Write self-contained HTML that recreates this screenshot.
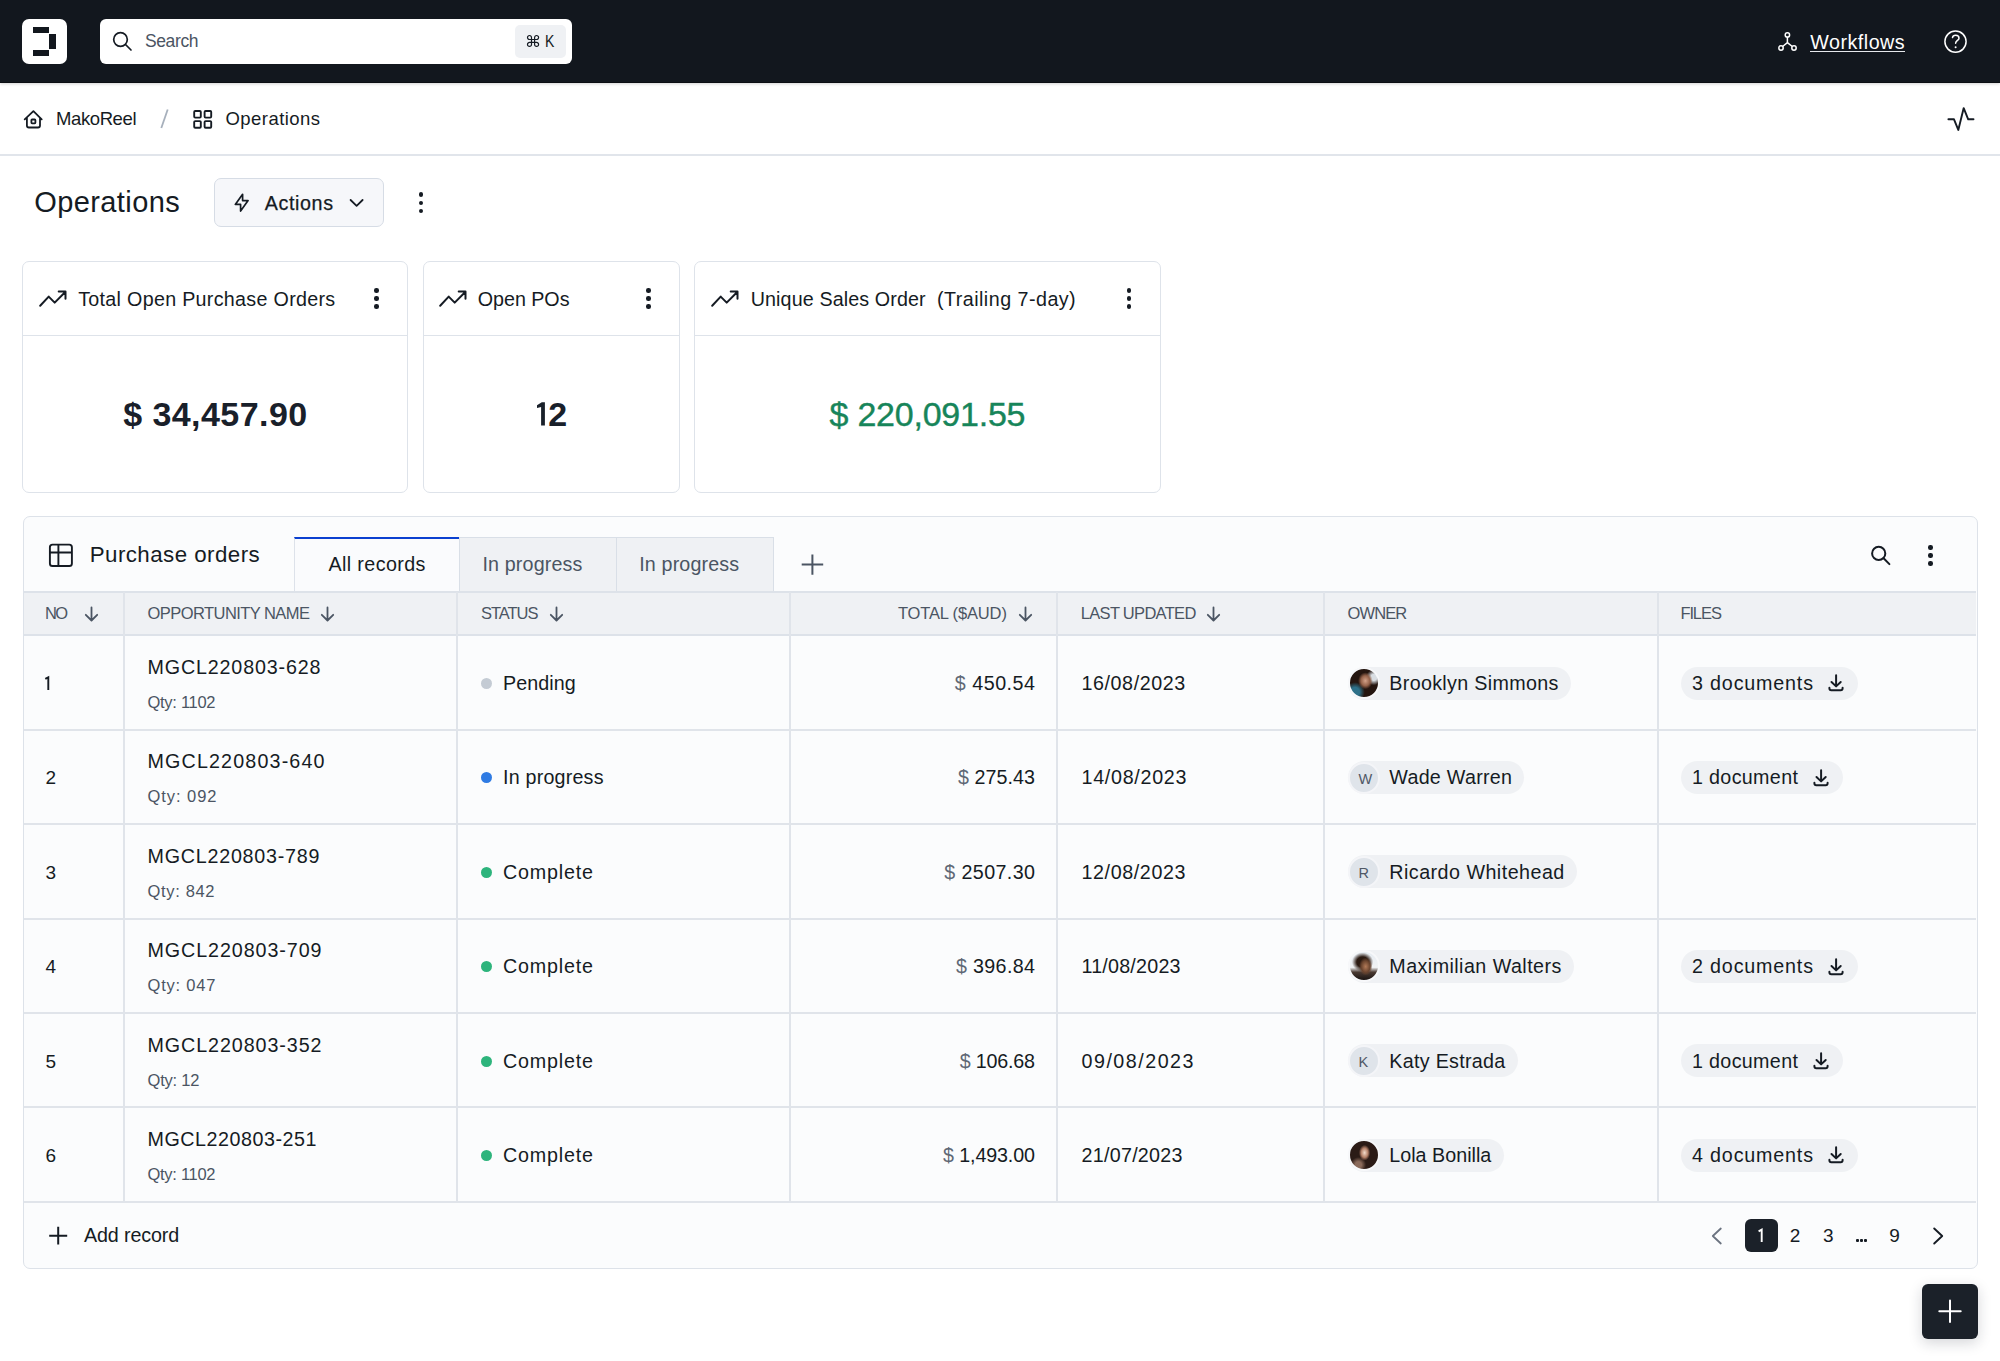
<!DOCTYPE html>
<html><head><meta charset="utf-8"><title>Operations</title>
<style>
html,body{margin:0;padding:0}
body{width:2000px;height:1361px;position:relative;overflow:hidden;background:#ffffff;font-family:"Liberation Sans", sans-serif}
.t{position:absolute;white-space:pre;font-family:"Liberation Sans", sans-serif}
svg{overflow:visible}
</style></head><body>
<div style="position:absolute;left:0;top:0;width:2000px;height:83px;background:#12171e;box-shadow:0 1px 3px rgba(0,0,0,0.18)"></div>
<div style="position:absolute;left:0;top:82px;width:2000px;height:1px;background:#0b0e13"></div>
<div style="position:absolute;left:22px;top:19px;width:45px;height:45px;background:#fff;border-radius:7px"></div>
<div style="position:absolute;left:33px;top:27px;width:16px;height:6px;background:#12171e"></div>
<div style="position:absolute;left:49px;top:34px;width:7px;height:15px;background:#12171e"></div>
<div style="position:absolute;left:33px;top:50px;width:16px;height:6px;background:#12171e"></div>
<div style="position:absolute;left:100px;top:19px;width:472px;height:45px;background:#fff;border-radius:6px"></div>
<svg style="position:absolute;left:108px;top:27px" width="30" height="30" viewBox="108 27 30 30"><circle cx="120.5" cy="39.5" r="6.8" fill="none" stroke="#151b23" stroke-width="1.7"/><line x1="125.5" y1="44.5" x2="131" y2="50" stroke="#151b23" stroke-width="1.7" stroke-linecap="round"/></svg>
<div style="position:absolute;left:515px;top:25px;width:51px;height:33px;background:#eff1f4;border-radius:5px"></div>
<svg style="position:absolute;left:522px;top:30px" width="24" height="24" viewBox="522 30 24 24"><path d="M531.5 39.5 V37.6 A2 2 0 1 0 529.6 39.5 H536.5 A2 2 0 1 0 534.6 37.6 V44.4 A2 2 0 1 0 536.5 42.45 H529.6 A2 2 0 1 0 531.5 44.4 Z" fill="none" stroke="#151b23" stroke-width="1.2"/></svg>
<svg style="position:absolute;left:1770px;top:25px" width="36" height="36" viewBox="1770 25 36 36" fill="none" stroke="#fff" stroke-width="1.5"><circle cx="1787.4" cy="34.9" r="2.2"/><circle cx="1781" cy="48" r="2.2"/><circle cx="1794" cy="48" r="2.2"/><path d="M1787.4 37.1 V42.6 L1782.6 46.5 M1787.4 42.6 L1792.3 46.5"/></svg>
<div style="position:absolute;left:1810px;top:51px;width:95px;height:1px;background:#e6e8ec"></div>
<svg style="position:absolute;left:1940px;top:26px" width="32" height="32" viewBox="1940 26 32 32" fill="none" stroke="#fff" stroke-width="1.5"><circle cx="1955.5" cy="41.6" r="10.6"/><path d="M1952.5 37.6 C1952.7 36 1954 35.3 1955.6 35.3 C1957.6 35.3 1959 36.5 1959 38.2 C1959 40.3 1955.6 40.7 1955.6 43.3" stroke-linecap="round"/><circle cx="1955.6" cy="47.3" r="1" fill="#fff" stroke="none"/></svg>
<div style="position:absolute;left:0;top:153.5px;width:2000px;height:2px;background:#e1e5eb"></div>
<svg style="position:absolute;left:20px;top:105px" width="28" height="28" viewBox="20 105 28 28" fill="none" stroke="#151b23" stroke-width="1.8" stroke-linejoin="round"><path d="M24.7 119.3 L33.4 111.2 L41.7 119.3 M26.9 117.6 V125.5 Q26.9 127.5 28.9 127.5 H38 Q40 127.5 40 125.5 V117.6" stroke-linecap="round"/><rect x="31.4" y="119.5" width="4" height="3.8" rx="0.7"/></svg>
<svg style="position:absolute;left:156px;top:105px" width="18" height="28" viewBox="156 105 18 28"><line x1="167.7" y1="109.5" x2="161.3" y2="128" stroke="#a7b0bc" stroke-width="1.8"/></svg>
<svg style="position:absolute;left:190px;top:106px" width="26" height="26" viewBox="190 106 26 26" fill="none" stroke="#151b23" stroke-width="1.9"><rect x="194.2" y="111" width="6.6" height="6.6" rx="1"/><rect x="204.6" y="111" width="6.6" height="6.6" rx="1"/><rect x="194.2" y="121.1" width="6.6" height="6.6" rx="1"/><rect x="204.6" y="121.1" width="6.6" height="6.6" rx="1"/></svg>
<svg style="position:absolute;left:1944px;top:104px" width="34" height="30" viewBox="1944 104 34 30" fill="none" stroke="#151b23" stroke-width="1.9" stroke-linejoin="round" stroke-linecap="round"><path d="M1948.4 119.3 H1954 L1958.3 129.9 L1963.7 108.1 L1968.2 119.3 H1973.5"/></svg>
<div style="position:absolute;left:214px;top:178px;width:170px;height:49px;box-sizing:border-box;background:#f6f7fa;border:1.5px solid #d6dce5;border-radius:7px"></div>
<svg style="position:absolute;left:228px;top:188px" width="24" height="30" viewBox="228 188 24 30" fill="none" stroke="#151b23" stroke-width="1.7" stroke-linejoin="round"><path d="M242.6 194.3 L235.3 204.4 H240.6 V211.1 L248.1 200.6 H242.6 Z"/></svg>
<svg style="position:absolute;left:345px;top:193px" width="22" height="18" viewBox="345 193 22 18" fill="none" stroke="#151b23" stroke-width="1.8" stroke-linecap="round" stroke-linejoin="round"><path d="M350.6 200 L356.6 205.8 L362.6 200"/></svg>
<div style="position:absolute;left:418.55px;top:192.40px;width:4.4px;height:4.4px;border-radius:50%;background:#151b23"></div>
<div style="position:absolute;left:418.55px;top:200.50px;width:4.4px;height:4.4px;border-radius:50%;background:#151b23"></div>
<div style="position:absolute;left:418.55px;top:208.65px;width:4.4px;height:4.4px;border-radius:50%;background:#151b23"></div>
<div style="position:absolute;left:22.2px;top:261px;width:386.3px;height:231.75px;box-sizing:border-box;background:#fff;border:1.5px solid #dee3ea;border-radius:7px"></div>
<div style="position:absolute;left:22.2px;top:334.75px;width:386.3px;height:1.5px;background:#dee3ea"></div>
<div style="position:absolute;left:422.55px;top:261px;width:257.8px;height:231.75px;box-sizing:border-box;background:#fff;border:1.5px solid #dee3ea;border-radius:7px"></div>
<div style="position:absolute;left:422.55px;top:334.75px;width:257.8px;height:1.5px;background:#dee3ea"></div>
<div style="position:absolute;left:694.35px;top:261px;width:466.9px;height:231.75px;box-sizing:border-box;background:#fff;border:1.5px solid #dee3ea;border-radius:7px"></div>
<div style="position:absolute;left:694.35px;top:334.75px;width:466.9px;height:1.5px;background:#dee3ea"></div>
<svg style="position:absolute;left:34.8px;top:286px" width="36" height="24" viewBox="34.8 286 36 24" fill="none" stroke="#151b23" stroke-width="2" stroke-linecap="round" stroke-linejoin="round"><path d="M39.97 305.7 L48.50 296.6 L54.50 302.6 L65.30 291.7 M58.50 291.6 H65.30 V298.7"/></svg>
<svg style="position:absolute;left:435.3px;top:286px" width="36" height="24" viewBox="435.3 286 36 24" fill="none" stroke="#151b23" stroke-width="2" stroke-linecap="round" stroke-linejoin="round"><path d="M440.47 305.7 L449.00 296.6 L455.00 302.6 L465.80 291.7 M459.00 291.6 H465.80 V298.7"/></svg>
<svg style="position:absolute;left:707.2px;top:286px" width="36" height="24" viewBox="707.2 286 36 24" fill="none" stroke="#151b23" stroke-width="2" stroke-linecap="round" stroke-linejoin="round"><path d="M712.37 305.7 L720.90 296.6 L726.90 302.6 L737.70 291.7 M730.90 291.6 H737.70 V298.7"/></svg>
<div style="position:absolute;left:374.25px;top:288.15px;width:4.5px;height:4.5px;border-radius:50%;background:#151b23"></div>
<div style="position:absolute;left:374.25px;top:296.25px;width:4.5px;height:4.5px;border-radius:50%;background:#151b23"></div>
<div style="position:absolute;left:374.25px;top:304.35px;width:4.5px;height:4.5px;border-radius:50%;background:#151b23"></div>
<div style="position:absolute;left:646.15px;top:288.15px;width:4.5px;height:4.5px;border-radius:50%;background:#151b23"></div>
<div style="position:absolute;left:646.15px;top:296.25px;width:4.5px;height:4.5px;border-radius:50%;background:#151b23"></div>
<div style="position:absolute;left:646.15px;top:304.35px;width:4.5px;height:4.5px;border-radius:50%;background:#151b23"></div>
<div style="position:absolute;left:1126.85px;top:288.15px;width:4.5px;height:4.5px;border-radius:50%;background:#151b23"></div>
<div style="position:absolute;left:1126.85px;top:296.25px;width:4.5px;height:4.5px;border-radius:50%;background:#151b23"></div>
<div style="position:absolute;left:1126.85px;top:304.35px;width:4.5px;height:4.5px;border-radius:50%;background:#151b23"></div>
<svg style="position:absolute;left:530px;top:396px" width="20" height="36" viewBox="530 396 20 36"><path d="M537 405.2 L541.8 402.2 H544.9 V425.5 H541.1 V406.9 L537 408.1 Z" fill="#19202a"/></svg>
<div style="position:absolute;left:22.5px;top:515.5px;width:1955.05px;height:753.75px;box-sizing:border-box;background:#fbfcfd;border:1.5px solid #dde2e9;border-radius:7px;overflow:hidden"></div>
<svg style="position:absolute;left:45px;top:540px" width="32" height="30" viewBox="45 540 32 30" fill="none" stroke="#151b23" stroke-width="1.9"><rect x="49.9" y="544.6" width="22" height="21.4" rx="2.6"/><path d="M49.9 552.5 H71.9 M58.4 544.6 V566"/></svg>
<div style="position:absolute;left:294.3px;top:537.4px;width:165.4px;height:55px;box-sizing:border-box;background:#fafbfd;border-left:1.5px solid #dde2ea;border-right:1.5px solid #dde2ea;border-top:2.6px solid #0b40d0"></div>
<div style="position:absolute;left:459px;top:537px;width:157px;height:55px;box-sizing:border-box;background:#eff1f4;border-left:1.5px solid #d9dfe7;border-top:1.5px solid #d9dfe7"></div>
<div style="position:absolute;left:616px;top:537px;width:158px;height:55px;box-sizing:border-box;background:#eff1f4;border-left:1.5px solid #d9dfe7;border-top:1.5px solid #d9dfe7;border-right:1.5px solid #d9dfe7"></div>
<svg style="position:absolute;left:796px;top:549px" width="32" height="32" viewBox="796 549 32 32" fill="none" stroke="#4b5563" stroke-width="2"><path d="M812.4 554.4 V574.8 M801.7 564.6 H823.2"/></svg>
<svg style="position:absolute;left:1866px;top:541px" width="28" height="28" viewBox="1866 541 28 28" fill="none" stroke="#151b23" stroke-width="2"><circle cx="1878.7" cy="553.4" r="6.6"/><line x1="1883.6" y1="558.3" x2="1889.4" y2="564.1" stroke-linecap="round"/></svg>
<div style="position:absolute;left:1928.3999999999999px;top:545.3px;width:4.4px;height:4.4px;border-radius:50%;background:#151b23"></div>
<div style="position:absolute;left:1928.3999999999999px;top:553.3px;width:4.4px;height:4.4px;border-radius:50%;background:#151b23"></div>
<div style="position:absolute;left:1928.3999999999999px;top:561.4px;width:4.4px;height:4.4px;border-radius:50%;background:#151b23"></div>
<div style="position:absolute;left:24px;top:591px;width:1952px;height:45px;box-sizing:border-box;background:#eff1f4;border-top:2px solid #dde2e9;border-bottom:2px solid #dde2e9"></div>
<div style="position:absolute;left:123px;top:592px;width:2px;height:610px;background:#e0e4ea"></div>
<div style="position:absolute;left:456px;top:592px;width:2px;height:610px;background:#e0e4ea"></div>
<div style="position:absolute;left:789px;top:592px;width:2px;height:610px;background:#e0e4ea"></div>
<div style="position:absolute;left:1056px;top:592px;width:2px;height:610px;background:#e0e4ea"></div>
<div style="position:absolute;left:1323px;top:592px;width:2px;height:610px;background:#e0e4ea"></div>
<div style="position:absolute;left:1657px;top:592px;width:2px;height:610px;background:#e0e4ea"></div>
<svg style="position:absolute;left:82px;top:603px" width="20" height="22" viewBox="82 603 20 22" fill="none" stroke="#4b5563" stroke-width="1.8" stroke-linecap="round" stroke-linejoin="round"><path d="M91.5 607.4 V620.3 M85.8 614.8 L91.5 620.5 L97.2 614.8"/></svg>
<svg style="position:absolute;left:318.3px;top:603px" width="20" height="22" viewBox="318.3 603 20 22" fill="none" stroke="#4b5563" stroke-width="1.8" stroke-linecap="round" stroke-linejoin="round"><path d="M327.8 607.4 V620.3 M322.1 614.8 L327.8 620.5 L333.5 614.8"/></svg>
<svg style="position:absolute;left:546.8px;top:603px" width="20" height="22" viewBox="546.8 603 20 22" fill="none" stroke="#4b5563" stroke-width="1.8" stroke-linecap="round" stroke-linejoin="round"><path d="M556.3 607.4 V620.3 M550.5999999999999 614.8 L556.3 620.5 L562.0 614.8"/></svg>
<svg style="position:absolute;left:1016px;top:603px" width="20" height="22" viewBox="1016 603 20 22" fill="none" stroke="#4b5563" stroke-width="1.8" stroke-linecap="round" stroke-linejoin="round"><path d="M1025.5 607.4 V620.3 M1019.8 614.8 L1025.5 620.5 L1031.2 614.8"/></svg>
<svg style="position:absolute;left:1204.2px;top:603px" width="20" height="22" viewBox="1204.2 603 20 22" fill="none" stroke="#4b5563" stroke-width="1.8" stroke-linecap="round" stroke-linejoin="round"><path d="M1213.7 607.4 V620.3 M1208.0 614.8 L1213.7 620.5 L1219.4 614.8"/></svg>
<div style="position:absolute;left:24px;top:729px;width:1952px;height:2px;background:#e0e4ea"></div>
<svg style="position:absolute;left:40px;top:672px" width="16" height="22" viewBox="40 672 16 22" fill="none" stroke="#151b23" stroke-width="1.9"><path d="M45.3 678.9 L48.3 677.3 V690"/></svg>
<div style="position:absolute;left:480.5px;top:677.9px;width:11px;height:11px;border-radius:50%;background:#c4cbd4"></div>
<div class="chip" style="position:absolute;left:1348px;top:666.6px;height:33px;border-radius:17px;background:#eff1f4;width:222.6px"></div>
<div style="position:absolute;left:1348px;top:667.1px;width:32px;height:32px;box-sizing:border-box;border-radius:50%;border:2px solid #f7f8fa;background:radial-gradient(ellipse 26% 30% at 55% 42%, #d2a188, #94624a 60%, rgba(60,35,25,0) 100%), radial-gradient(circle at 18% 82%, #2d7088 0 14%, rgba(0,0,0,0) 30%), radial-gradient(circle at 85% 30%, #d8dde2 0 10%, rgba(0,0,0,0) 25%), #24150f"></div>
<div style="position:absolute;left:1680.6px;top:666.6px;height:33px;width:177.7px;border-radius:17px;background:#eff1f4"></div>
<svg style="position:absolute;left:1824.8px;top:671.4px" width="24" height="24" viewBox="0 0 24 24" fill="none" stroke="#151b23" stroke-width="2" stroke-linecap="round" stroke-linejoin="round"><path d="M11.1 4.3 V14.8 M6.5 11 L11.1 15.4 L15.7 11 M4.4 16.8 V17.3 Q4.4 19.2 6.3 19.2 H15.7 Q17.6 19.2 17.6 17.3 V16.8" stroke-width="2"/></svg>
<div style="position:absolute;left:24px;top:823px;width:1952px;height:2px;background:#e0e4ea"></div>
<div style="position:absolute;left:480.5px;top:772.3px;width:11px;height:11px;border-radius:50%;background:#2f7be3"></div>
<div class="chip" style="position:absolute;left:1348px;top:761.0px;height:33px;border-radius:17px;background:#eff1f4;width:176.3px"></div>
<div style="position:absolute;left:1348px;top:761.5px;width:32px;height:32px;box-sizing:border-box;border-radius:50%;border:2px solid #f4f5f8;background:#dfe4ea"></div>
<div style="position:absolute;left:1680.6px;top:761.0px;height:33px;width:162.6px;border-radius:17px;background:#eff1f4"></div>
<svg style="position:absolute;left:1809.7px;top:765.8px" width="24" height="24" viewBox="0 0 24 24" fill="none" stroke="#151b23" stroke-width="2" stroke-linecap="round" stroke-linejoin="round"><path d="M11.1 4.3 V14.8 M6.5 11 L11.1 15.4 L15.7 11 M4.4 16.8 V17.3 Q4.4 19.2 6.3 19.2 H15.7 Q17.6 19.2 17.6 17.3 V16.8" stroke-width="2"/></svg>
<div style="position:absolute;left:24px;top:918px;width:1952px;height:2px;background:#e0e4ea"></div>
<div style="position:absolute;left:480.5px;top:866.7px;width:11px;height:11px;border-radius:50%;background:#2db47c"></div>
<div class="chip" style="position:absolute;left:1348px;top:855.4px;height:33px;border-radius:17px;background:#eff1f4;width:228.6px"></div>
<div style="position:absolute;left:1348px;top:855.9px;width:32px;height:32px;box-sizing:border-box;border-radius:50%;border:2px solid #f4f5f8;background:#dfe4ea"></div>
<div style="position:absolute;left:24px;top:1012px;width:1952px;height:2px;background:#e0e4ea"></div>
<div style="position:absolute;left:480.5px;top:961.1px;width:11px;height:11px;border-radius:50%;background:#2db47c"></div>
<div class="chip" style="position:absolute;left:1348px;top:949.8px;height:33px;border-radius:17px;background:#eff1f4;width:225.6px"></div>
<div style="position:absolute;left:1348px;top:950.3px;width:32px;height:32px;box-sizing:border-box;border-radius:50%;border:2px solid #f7f8fa;background:radial-gradient(ellipse 24% 32% at 56% 52%, #b27a58, #6a442e 65%, rgba(0,0,0,0) 100%), radial-gradient(ellipse 38% 34% at 45% 36%, #2b1a12 0 55%, rgba(0,0,0,0) 100%), linear-gradient(#e6ecf2, #f1f3f5 55%, #4a3a32 72%, #1a1412)"></div>
<div style="position:absolute;left:1680.6px;top:949.8px;height:33px;width:177.7px;border-radius:17px;background:#eff1f4"></div>
<svg style="position:absolute;left:1824.8px;top:954.6px" width="24" height="24" viewBox="0 0 24 24" fill="none" stroke="#151b23" stroke-width="2" stroke-linecap="round" stroke-linejoin="round"><path d="M11.1 4.3 V14.8 M6.5 11 L11.1 15.4 L15.7 11 M4.4 16.8 V17.3 Q4.4 19.2 6.3 19.2 H15.7 Q17.6 19.2 17.6 17.3 V16.8" stroke-width="2"/></svg>
<div style="position:absolute;left:24px;top:1106px;width:1952px;height:2px;background:#e0e4ea"></div>
<div style="position:absolute;left:480.5px;top:1055.5px;width:11px;height:11px;border-radius:50%;background:#2db47c"></div>
<div class="chip" style="position:absolute;left:1348px;top:1044.2px;height:33px;border-radius:17px;background:#eff1f4;width:169.6px"></div>
<div style="position:absolute;left:1348px;top:1044.7px;width:32px;height:32px;box-sizing:border-box;border-radius:50%;border:2px solid #f4f5f8;background:#dfe4ea"></div>
<div style="position:absolute;left:1680.6px;top:1044.2px;height:33px;width:162.6px;border-radius:17px;background:#eff1f4"></div>
<svg style="position:absolute;left:1809.7px;top:1049.0px" width="24" height="24" viewBox="0 0 24 24" fill="none" stroke="#151b23" stroke-width="2" stroke-linecap="round" stroke-linejoin="round"><path d="M11.1 4.3 V14.8 M6.5 11 L11.1 15.4 L15.7 11 M4.4 16.8 V17.3 Q4.4 19.2 6.3 19.2 H15.7 Q17.6 19.2 17.6 17.3 V16.8" stroke-width="2"/></svg>
<div style="position:absolute;left:24px;top:1201px;width:1952px;height:2px;background:#e0e4ea"></div>
<div style="position:absolute;left:480.5px;top:1149.9px;width:11px;height:11px;border-radius:50%;background:#2db47c"></div>
<div class="chip" style="position:absolute;left:1348px;top:1138.6px;height:33px;border-radius:17px;background:#eff1f4;width:155.6px"></div>
<div style="position:absolute;left:1348px;top:1139.1px;width:32px;height:32px;box-sizing:border-box;border-radius:50%;border:2px solid #f7f8fa;background:radial-gradient(ellipse 20% 28% at 52% 42%, #f3dccb, #b48068 60%, rgba(0,0,0,0) 100%), radial-gradient(circle at 30% 85%, #8a6a5a 0 10%, rgba(0,0,0,0) 25%), #2b1b16"></div>
<div style="position:absolute;left:1680.6px;top:1138.6px;height:33px;width:177.7px;border-radius:17px;background:#eff1f4"></div>
<svg style="position:absolute;left:1824.8px;top:1143.4px" width="24" height="24" viewBox="0 0 24 24" fill="none" stroke="#151b23" stroke-width="2" stroke-linecap="round" stroke-linejoin="round"><path d="M11.1 4.3 V14.8 M6.5 11 L11.1 15.4 L15.7 11 M4.4 16.8 V17.3 Q4.4 19.2 6.3 19.2 H15.7 Q17.6 19.2 17.6 17.3 V16.8" stroke-width="2"/></svg>
<svg style="position:absolute;left:44px;top:1222px" width="28" height="28" viewBox="44 1222 28 28" fill="none" stroke="#151b23" stroke-width="2"><path d="M58.2 1226.7 V1244.6 M49.2 1235.7 H67.2"/></svg>
<svg style="position:absolute;left:1706px;top:1224px" width="22" height="24" viewBox="1706 1224 22 24" fill="none" stroke="#6b7380" stroke-width="1.8" stroke-linecap="round" stroke-linejoin="round"><path d="M1720.8 1228.5 L1712.8 1236 L1720.8 1243.5"/></svg>
<div style="position:absolute;left:1744.7px;top:1219.3px;width:33px;height:33px;border-radius:6px;background:#1b2129"></div>
<svg style="position:absolute;left:1750px;top:1222px" width="22" height="28" viewBox="1750 1222 22 28" fill="none" stroke="#ffffff" stroke-width="1.9"><path d="M1758.6 1231.4 L1761.7 1229.6 V1242"/></svg>
<div style="position:absolute;left:1856px;top:1239px;width:3px;height:3px;background:#151b23;border-radius:1px"></div><div style="position:absolute;left:1860.2px;top:1239px;width:3px;height:3px;background:#151b23;border-radius:1px"></div><div style="position:absolute;left:1864.4px;top:1239px;width:3px;height:3px;background:#151b23;border-radius:1px"></div>
<svg style="position:absolute;left:1926px;top:1224px" width="22" height="24" viewBox="1926 1224 22 24" fill="none" stroke="#151b23" stroke-width="1.9" stroke-linecap="round" stroke-linejoin="round"><path d="M1934.2 1228.5 L1942.2 1236 L1934.2 1243.5"/></svg>
<div style="position:absolute;left:1922px;top:1283.5px;width:55.5px;height:55.5px;border-radius:6px;background:#1b2129;box-shadow:0 4px 14px rgba(20,30,45,0.18)"></div>
<svg style="position:absolute;left:1930px;top:1291px" width="40" height="40" viewBox="1930 1291 40 40" fill="none" stroke="#fff" stroke-width="2"><path d="M1950 1300.5 V1322 M1939.3 1311.2 H1960.7" stroke-linecap="round"/></svg>
<div class="t" style="left:145.00px;top:33.00px;font-size:17.5px;line-height:17.5px;color:#4b5563;font-weight:400;letter-spacing:-0.391px;">Search</div>
<div class="t" style="left:545.00px;top:33.00px;font-size:16.5px;line-height:16.5px;color:#151b23;font-weight:400;letter-spacing:0.000px;transform:scaleX(0.85);transform-origin:0 0;">K</div>
<div class="t" style="left:1810.20px;top:33.00px;font-size:19.7px;line-height:19.7px;color:#ffffff;font-weight:400;letter-spacing:0.508px;">Workflows</div>
<div class="t" style="left:56.00px;top:110.00px;font-size:18.5px;line-height:18.5px;color:#151b23;font-weight:400;letter-spacing:-0.400px;">MakoReel</div>
<div class="t" style="left:225.50px;top:110.00px;font-size:18.5px;line-height:18.5px;color:#151b23;font-weight:400;letter-spacing:0.444px;">Operations</div>
<div class="t" style="left:34.30px;top:188.00px;font-size:29px;line-height:29px;color:#151b23;font-weight:400;letter-spacing:0.393px;">Operations</div>
<div class="t" style="left:264.70px;top:194.00px;font-size:19.7px;line-height:19.7px;color:#151b23;font-weight:400;letter-spacing:0.623px;-webkit-text-stroke:0.25px #151b23;">Actions</div>
<div class="t" style="left:78.20px;top:290.00px;font-size:19.7px;line-height:19.7px;color:#151b23;font-weight:400;letter-spacing:0.300px;">Total Open Purchase Orders</div>
<div class="t" style="left:477.80px;top:290.00px;font-size:19.7px;line-height:19.7px;color:#151b23;font-weight:400;letter-spacing:-0.032px;">Open POs</div>
<div class="t" style="left:750.70px;top:290.00px;font-size:19.7px;line-height:19.7px;color:#151b23;font-weight:400;letter-spacing:0.123px;">Unique Sales Order</div>
<div class="t" style="left:936.90px;top:290.00px;font-size:19.7px;line-height:19.7px;color:#151b23;font-weight:400;letter-spacing:0.476px;">(Trailing 7-day)</div>
<div class="t" style="left:123.20px;top:397.00px;font-size:34px;line-height:34px;color:#19202a;font-weight:700;letter-spacing:0.438px;">$ 34,457.90</div>
<div class="t" style="left:548.20px;top:397.00px;font-size:34px;line-height:34px;color:#19202a;font-weight:700;letter-spacing:0.000px;">2</div>
<div class="t" style="left:829.50px;top:397.00px;font-size:34px;line-height:34px;color:#17855a;font-weight:400;letter-spacing:-0.230px;-webkit-text-stroke:0.4px #17855a;">$ 220,091.55</div>
<div class="t" style="left:89.70px;top:544.00px;font-size:22.3px;line-height:22.3px;color:#151b23;font-weight:400;letter-spacing:0.458px;">Purchase orders</div>
<div class="t" style="left:328.40px;top:555.00px;font-size:19.7px;line-height:19.7px;color:#151b23;font-weight:400;letter-spacing:0.400px;">All records</div>
<div class="t" style="left:482.40px;top:555.00px;font-size:19.7px;line-height:19.7px;color:#4b5563;font-weight:400;letter-spacing:0.150px;">In progress</div>
<div class="t" style="left:639.20px;top:555.00px;font-size:19.7px;line-height:19.7px;color:#4b5563;font-weight:400;letter-spacing:0.150px;">In progress</div>
<div class="t" style="left:45.00px;top:605.00px;font-size:16.5px;line-height:16.5px;color:#4b5563;font-weight:400;letter-spacing:-1.550px;">NO</div>
<div class="t" style="left:147.50px;top:605.00px;font-size:16.5px;line-height:16.5px;color:#4b5563;font-weight:400;letter-spacing:-0.556px;">OPPORTUNITY NAME</div>
<div class="t" style="left:481.00px;top:605.00px;font-size:16.5px;line-height:16.5px;color:#4b5563;font-weight:400;letter-spacing:-1.048px;">STATUS</div>
<div class="t" style="left:897.90px;top:605.00px;font-size:16.5px;line-height:16.5px;color:#4b5563;font-weight:400;letter-spacing:-0.149px;">TOTAL ($AUD)</div>
<div class="t" style="left:1080.80px;top:605.00px;font-size:16.5px;line-height:16.5px;color:#4b5563;font-weight:400;letter-spacing:-0.697px;">LAST UPDATED</div>
<div class="t" style="left:1347.50px;top:605.00px;font-size:16.5px;line-height:16.5px;color:#4b5563;font-weight:400;letter-spacing:-0.887px;">OWNER</div>
<div class="t" style="left:1680.40px;top:605.00px;font-size:16.5px;line-height:16.5px;color:#4b5563;font-weight:400;letter-spacing:-1.090px;">FILES</div>
<div class="t" style="left:147.50px;top:658.00px;font-size:19.7px;line-height:19.7px;color:#151b23;font-weight:400;letter-spacing:0.847px;">MGCL220803-628</div>
<div class="t" style="left:147.50px;top:694.00px;font-size:16.5px;line-height:16.5px;color:#4b5563;font-weight:400;letter-spacing:-0.291px;">Qty: 1102</div>
<div class="t" style="left:503.00px;top:674.00px;font-size:19.7px;line-height:19.7px;color:#151b23;font-weight:400;letter-spacing:0.056px;">Pending</div>
<div class="t" style="left:954.80px;top:674.00px;font-size:19.7px;line-height:19.7px;color:#151b23;font-weight:400;letter-spacing:0.508px;"><span style="color:#5f6875">$</span> 450.54</div>
<div class="t" style="left:1081.50px;top:674.00px;font-size:19.7px;line-height:19.7px;color:#151b23;font-weight:400;letter-spacing:0.573px;">16/08/2023</div>
<div class="t" style="left:1389.30px;top:674.00px;font-size:19.7px;line-height:19.7px;color:#151b23;font-weight:400;letter-spacing:0.325px;">Brooklyn Simmons</div>
<div class="t" style="left:1692.00px;top:674.00px;font-size:19.7px;line-height:19.7px;color:#151b23;font-weight:400;letter-spacing:0.827px;">3 documents</div>
<div class="t" style="left:45.50px;top:768.00px;font-size:19px;line-height:19px;color:#151b23;font-weight:400;letter-spacing:0.000px;">2</div>
<div class="t" style="left:147.50px;top:752.00px;font-size:19.7px;line-height:19.7px;color:#151b23;font-weight:400;letter-spacing:1.155px;">MGCL220803-640</div>
<div class="t" style="left:147.50px;top:788.00px;font-size:16.5px;line-height:16.5px;color:#4b5563;font-weight:400;letter-spacing:0.946px;">Qty: 092</div>
<div class="t" style="left:503.00px;top:768.00px;font-size:19.7px;line-height:19.7px;color:#151b23;font-weight:400;letter-spacing:0.200px;">In progress</div>
<div class="t" style="left:958.00px;top:768.00px;font-size:19.7px;line-height:19.7px;color:#151b23;font-weight:400;letter-spacing:0.051px;"><span style="color:#5f6875">$</span> 275.43</div>
<div class="t" style="left:1081.50px;top:768.00px;font-size:19.7px;line-height:19.7px;color:#151b23;font-weight:400;letter-spacing:0.717px;">14/08/2023</div>
<div class="t" style="left:1358.60px;top:772.00px;font-size:14.5px;line-height:14.5px;color:#4f5866;font-weight:400;letter-spacing:0.000px;">W</div>
<div class="t" style="left:1389.30px;top:768.00px;font-size:19.7px;line-height:19.7px;color:#151b23;font-weight:400;letter-spacing:0.272px;">Wade Warren</div>
<div class="t" style="left:1692.00px;top:768.00px;font-size:19.7px;line-height:19.7px;color:#151b23;font-weight:400;letter-spacing:0.334px;">1 document</div>
<div class="t" style="left:45.50px;top:863.00px;font-size:19px;line-height:19px;color:#151b23;font-weight:400;letter-spacing:0.000px;">3</div>
<div class="t" style="left:147.50px;top:847.00px;font-size:19.7px;line-height:19.7px;color:#151b23;font-weight:400;letter-spacing:0.770px;">MGCL220803-789</div>
<div class="t" style="left:147.50px;top:883.00px;font-size:16.5px;line-height:16.5px;color:#4b5563;font-weight:400;letter-spacing:0.661px;">Qty: 842</div>
<div class="t" style="left:503.00px;top:863.00px;font-size:19.7px;line-height:19.7px;color:#151b23;font-weight:400;letter-spacing:0.819px;">Complete</div>
<div class="t" style="left:944.30px;top:863.00px;font-size:19.7px;line-height:19.7px;color:#151b23;font-weight:400;letter-spacing:0.388px;"><span style="color:#5f6875">$</span> 2507.30</div>
<div class="t" style="left:1081.50px;top:863.00px;font-size:19.7px;line-height:19.7px;color:#151b23;font-weight:400;letter-spacing:0.606px;">12/08/2023</div>
<div class="t" style="left:1358.60px;top:866.00px;font-size:14.5px;line-height:14.5px;color:#4f5866;font-weight:400;letter-spacing:0.000px;">R</div>
<div class="t" style="left:1389.30px;top:863.00px;font-size:19.7px;line-height:19.7px;color:#151b23;font-weight:400;letter-spacing:0.473px;">Ricardo Whitehead</div>
<div class="t" style="left:45.50px;top:957.00px;font-size:19px;line-height:19px;color:#151b23;font-weight:400;letter-spacing:0.000px;">4</div>
<div class="t" style="left:147.50px;top:941.00px;font-size:19.7px;line-height:19.7px;color:#151b23;font-weight:400;letter-spacing:0.924px;">MGCL220803-709</div>
<div class="t" style="left:147.50px;top:977.00px;font-size:16.5px;line-height:16.5px;color:#4b5563;font-weight:400;letter-spacing:0.804px;">Qty: 047</div>
<div class="t" style="left:503.00px;top:957.00px;font-size:19.7px;line-height:19.7px;color:#151b23;font-weight:400;letter-spacing:0.819px;">Complete</div>
<div class="t" style="left:955.90px;top:957.00px;font-size:19.7px;line-height:19.7px;color:#151b23;font-weight:400;letter-spacing:0.351px;"><span style="color:#5f6875">$</span> 396.84</div>
<div class="t" style="left:1081.50px;top:957.00px;font-size:19.7px;line-height:19.7px;color:#151b23;font-weight:400;letter-spacing:0.214px;">11/08/2023</div>
<div class="t" style="left:1389.30px;top:957.00px;font-size:19.7px;line-height:19.7px;color:#151b23;font-weight:400;letter-spacing:0.444px;">Maximilian Walters</div>
<div class="t" style="left:1692.00px;top:957.00px;font-size:19.7px;line-height:19.7px;color:#151b23;font-weight:400;letter-spacing:0.827px;">2 documents</div>
<div class="t" style="left:45.50px;top:1052.00px;font-size:19px;line-height:19px;color:#151b23;font-weight:400;letter-spacing:0.000px;">5</div>
<div class="t" style="left:147.50px;top:1036.00px;font-size:19.7px;line-height:19.7px;color:#151b23;font-weight:400;letter-spacing:0.924px;">MGCL220803-352</div>
<div class="t" style="left:147.50px;top:1072.00px;font-size:16.5px;line-height:16.5px;color:#4b5563;font-weight:400;letter-spacing:-0.201px;">Qty: 12</div>
<div class="t" style="left:503.00px;top:1052.00px;font-size:19.7px;line-height:19.7px;color:#151b23;font-weight:400;letter-spacing:0.819px;">Complete</div>
<div class="t" style="left:959.70px;top:1052.00px;font-size:19.7px;line-height:19.7px;color:#151b23;font-weight:400;letter-spacing:-0.192px;"><span style="color:#5f6875">$</span> 106.68</div>
<div class="t" style="left:1081.50px;top:1052.00px;font-size:19.7px;line-height:19.7px;color:#151b23;font-weight:400;letter-spacing:1.495px;">09/08/2023</div>
<div class="t" style="left:1358.60px;top:1055.00px;font-size:14.5px;line-height:14.5px;color:#4f5866;font-weight:400;letter-spacing:0.000px;">K</div>
<div class="t" style="left:1389.30px;top:1052.00px;font-size:19.7px;line-height:19.7px;color:#151b23;font-weight:400;letter-spacing:0.298px;">Katy Estrada</div>
<div class="t" style="left:1692.00px;top:1052.00px;font-size:19.7px;line-height:19.7px;color:#151b23;font-weight:400;letter-spacing:0.334px;">1 document</div>
<div class="t" style="left:45.50px;top:1146.00px;font-size:19px;line-height:19px;color:#151b23;font-weight:400;letter-spacing:0.000px;">6</div>
<div class="t" style="left:147.50px;top:1130.00px;font-size:19.7px;line-height:19.7px;color:#151b23;font-weight:400;letter-spacing:0.540px;">MGCL220803-251</div>
<div class="t" style="left:147.50px;top:1166.00px;font-size:16.5px;line-height:16.5px;color:#4b5563;font-weight:400;letter-spacing:-0.291px;">Qty: 1102</div>
<div class="t" style="left:503.00px;top:1146.00px;font-size:19.7px;line-height:19.7px;color:#151b23;font-weight:400;letter-spacing:0.819px;">Complete</div>
<div class="t" style="left:943.00px;top:1146.00px;font-size:19.7px;line-height:19.7px;color:#151b23;font-weight:400;letter-spacing:-0.118px;"><span style="color:#5f6875">$</span> 1,493.00</div>
<div class="t" style="left:1081.50px;top:1146.00px;font-size:19.7px;line-height:19.7px;color:#151b23;font-weight:400;letter-spacing:0.273px;">21/07/2023</div>
<div class="t" style="left:1389.30px;top:1146.00px;font-size:19.7px;line-height:19.7px;color:#151b23;font-weight:400;letter-spacing:0.018px;">Lola Bonilla</div>
<div class="t" style="left:1692.00px;top:1146.00px;font-size:19.7px;line-height:19.7px;color:#151b23;font-weight:400;letter-spacing:0.827px;">4 documents</div>
<div class="t" style="left:84.00px;top:1226.00px;font-size:19.7px;line-height:19.7px;color:#151b23;font-weight:400;letter-spacing:-0.124px;">Add record</div>
<div class="t" style="left:1789.70px;top:1226.00px;font-size:19px;line-height:19px;color:#151b23;font-weight:400;letter-spacing:0.000px;">2</div>
<div class="t" style="left:1823.00px;top:1226.00px;font-size:19px;line-height:19px;color:#151b23;font-weight:400;letter-spacing:0.000px;">3</div>
<div class="t" style="left:1889.30px;top:1226.00px;font-size:19px;line-height:19px;color:#151b23;font-weight:400;letter-spacing:0.000px;">9</div>
</body></html>
